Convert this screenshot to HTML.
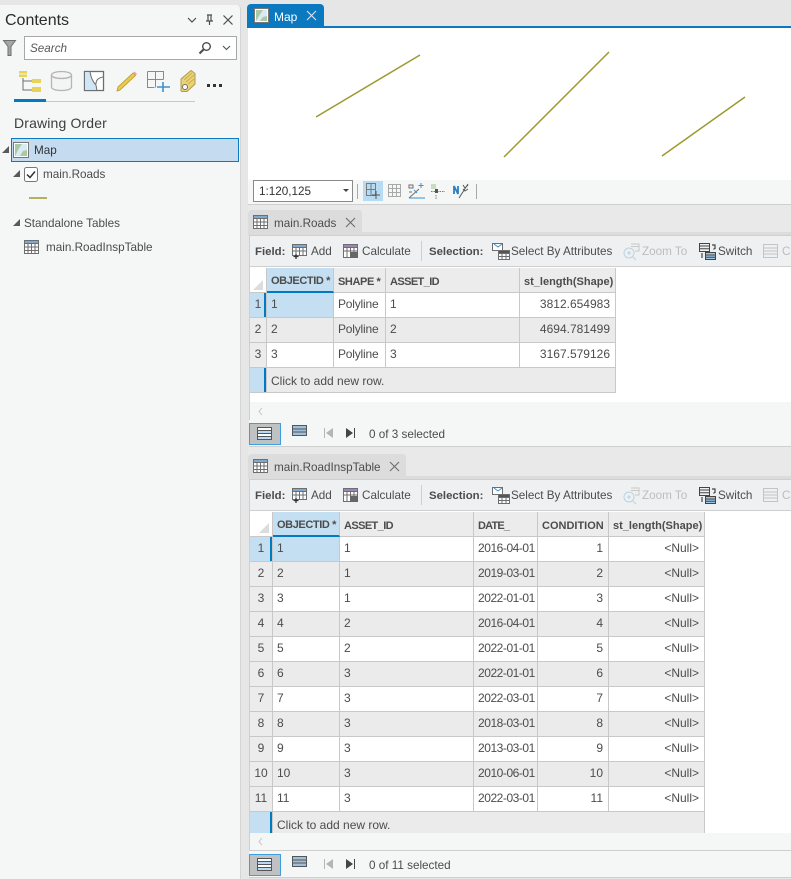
<!DOCTYPE html>
<html><head><meta charset="utf-8"><title>Contents</title>
<style>
html,body{margin:0;padding:0}
body{width:791px;height:879px;overflow:hidden;background:#e6e6e6;position:relative;font-family:"Liberation Sans",sans-serif;font-size:11.7px;color:#4c4c4c}
.a{position:absolute}
.t{position:absolute;white-space:nowrap;line-height:16px;margin-top:1px}
.b{font-weight:bold;font-size:11.4px}
.g{color:#bdbdbd}
table{position:absolute;border-collapse:separate;border-spacing:0;table-layout:fixed;font-size:12px;color:#4c4c4c}
td,th{box-sizing:border-box;height:25px;padding:0 4px;border-right:1px solid #c8c8c8;border-bottom:1px solid #c8c8c8;background:#fff;text-align:left;font-weight:normal;white-space:nowrap;overflow:hidden}
td{padding-bottom:2px}
th{background:#ececec;font-weight:bold;color:#4c4c4c;font-size:11px;padding-top:3px}
tr.e td{background:#ebebeb}
td.n,tr.e td.n{background:#ececec;text-align:center;padding:0 0 2px}
td.r{text-align:right;padding-right:5px}
th.s{background:#c5dff2;border-bottom:2px solid #007ac2}
td.n.s{background:#c5dff2!important;box-shadow:inset -2px 0 0 #007ac2}
td.s2{background:#c5dff2}
td.d{letter-spacing:-.45px}
td.p{letter-spacing:-.2px}
td.k{padding-top:2px;padding-bottom:0}
svg{position:absolute;overflow:visible}
</style></head><body>

<!-- Contents pane -->
<div class="a" style="left:0;top:5px;width:240px;height:874px;background:#f5f6f6;border-top-right-radius:4px;border-right:1px solid #d4d4d4"></div>
<div class="t" style="left:5px;top:10px;font-size:16px;line-height:20px;color:#2b2b2b">Contents</div>
<svg style="left:186px;top:14px" width="54" height="14" fill="none" stroke="#4c4c4c" stroke-width="1.2"><path d="M2 4l4 4 4-4"/><path d="M21 1h5M22 1v6M25 1v6M20 7h7M23.500 7v4"/><path d="M37.500 1.500l9 9M46.500 1.500l-9 9"/></svg>
<svg style="left:3px;top:40px" width="13" height="16"><path d="M0.500 .5h12l-4.500 6v9H5V6.500z" fill="#a5a5a5" stroke="#6e6e6e"/></svg>
<div class="a" style="left:24px;top:36px;width:211px;height:22px;background:#fff;border:1px solid #a8a8a8"></div>
<div class="t" style="left:30px;top:40px;font-style:italic;color:#595959">Search</div>
<svg style="left:198px;top:41px" width="40" height="14" fill="none" stroke="#4c4c4c" stroke-width="1.4"><circle cx="8.500" cy="5.500" r="3.800"/><path d="M5.500 8.500L1.500 12.500" stroke-width="2"/><path d="M25 5l3.500 3.500L32 5" stroke-width="1"/></svg>

<svg style="left:18px;top:70px" width="190" height="24" fill="none">
<path d="M1 1h8v2.500H1zM1 4.500h8V7H1z" fill="#e8d356"/>
<path d="M5 8v12h9M5 11h9" stroke="#6e6e6e"/>
<path d="M14 9h9v4h-9zM14 17h9v5h-9z" fill="#e8d356"/>
<ellipse cx="43.500" cy="5" rx="10" ry="3.500" fill="#f4f4f4" stroke="#b5b5b5" stroke-width="1.300"/>
<path d="M33.500 5v12c0 2 4 3.500 10 3.500s10-1.500 10-3.500V5c0 2-4 3.500-10 3.500S33.500 7 33.500 5z" fill="#f4f4f4" stroke="#b5b5b5" stroke-width="1.300"/>
<rect x="66.500" y="1.500" width="19" height="19" fill="#fff" stroke="#6e6e6e" stroke-width="1.300"/>
<path d="M67 2h5c1 6 3 10 6 13l1 5H67z" fill="#cfe6f6"/>
<path d="M72 2c1 6 3 10 6 13l1 6M78 14c0-4 2-6 7-7" stroke="#6e6e6e"/>
<path d="M99 21l1-4L115 3l2.500 2.500L102 20z" fill="#edc949" stroke="#b59a2e" stroke-width=".8"/>
<path d="M115 3l1.500-1.500 2.500 2.500-1.500 1.500z" fill="#e9a58c"/>
<path d="M129.500 1.500h16v8M129.500 1.500v16h7M137.500 1.500v16M129.500 9.500h16" stroke="#8a8a8a"/>
<path d="M145 12v10M139 17h13" stroke="#3f90cf" stroke-width="1.600"/>
<path d="M163 21V9l10-8.500 4 3V14l-8 7.500h-5z" fill="#ead277" stroke="#b09a4c"/>
<path d="M166 10l8-7M168 12l8-7M170 14l6-5" stroke="#c9b04e"/>
<circle cx="167" cy="17" r="2.500" fill="#fff" stroke="#6e6e6e"/>
</svg>
<div class="a" style="left:207px;top:84px;width:3px;height:3px;background:#333"></div>
<div class="a" style="left:213px;top:84px;width:3px;height:3px;background:#333"></div>
<div class="a" style="left:219px;top:84px;width:3px;height:3px;background:#333"></div>
<div class="a" style="left:14px;top:101px;width:181px;height:1px;background:#c8c8c8"></div>
<div class="a" style="left:14px;top:99px;width:32px;height:3px;background:#007ac2"></div>
<div class="t" style="left:14px;top:113px;font-size:14px;line-height:18px;letter-spacing:.15px;color:#3d3d3d">Drawing Order</div>

<div class="a" style="left:11px;top:138px;width:226px;height:22px;background:#c5dbef;border:1px solid #0b7ac0"></div>
<svg style="left:2px;top:146px" width="8" height="8"><path d="M0 7h7V0z" fill="#5a5a5a"/></svg>
<svg style="left:13px;top:142px" width="16" height="16"><rect x=".5" y=".5" width="15" height="15" fill="#fff" stroke="#777"/><rect x="2" y="2" width="12" height="12" fill="#dbe9f3"/><path d="M2 2h7L5 8l-3 6z" fill="#a9c9a4"/><path d="M7 14h7V8l-4 1z" fill="#a9c9a4"/></svg>
<div class="t" style="left:34px;top:142px;color:#333">Map</div>
<svg style="left:13px;top:170px" width="8" height="8"><path d="M0 7h7V0z" fill="#5a5a5a"/></svg>
<svg style="left:24px;top:167px" width="15" height="15" fill="none"><rect x=".5" y=".5" width="13" height="14" rx="2" fill="#fff" stroke="#777"/><path d="M3 7.500l3 3 5-6" stroke="#333" stroke-width="1.500"/></svg>
<div class="t" style="left:43px;top:166px">main.Roads</div>
<div class="a" style="left:29px;top:197px;width:18px;height:2px;background:#b5b060"></div>
<svg style="left:13px;top:219px" width="8" height="8"><path d="M0 7h7V0z" fill="#5a5a5a"/></svg>
<div class="t" style="left:24px;top:215px">Standalone Tables</div>
<svg style="left:24px;top:240px" width="15" height="14" fill="none" stroke="#6e6e6e"><rect x=".5" y=".5" width="14" height="13" fill="#fff"/><rect x=".5" y=".5" width="14" height="3" fill="#7fa9cf" stroke="#6e6e6e"/><path d="M.5 7h14M.5 10.500h14M4 3.500v10M7.500 3.500v10M11 3.500v10"/></svg>
<div class="t" style="left:46px;top:239px">main.RoadInspTable</div>

<!-- Map tab -->
<div class="a" style="left:247px;top:4px;width:77px;height:22px;background:#0a79bf;border-radius:4px 4px 0 0"></div>
<div class="a" style="left:247px;top:26px;width:544px;height:2px;background:#0a79bf"></div>
<svg style="left:254px;top:8px" width="15" height="15"><rect x=".5" y=".5" width="14" height="14" fill="#fff" stroke="#777"/><rect x="2" y="2" width="11" height="11" fill="#dbe9f3"/><path d="M2 2h7L5 8l-3 5z" fill="#a9c9a4"/><path d="M6 13h7V8l-4 1z" fill="#a9c9a4"/></svg>
<div class="t" style="left:274px;top:8px;color:#fff;font-size:12px">Map</div>
<svg style="left:307px;top:11px" width="10" height="10" stroke="#d5e9f7" stroke-width="1.100"><path d="M0 0l9 9M9 0L0 9"/></svg>

<!-- Map -->
<div class="a" style="left:248px;top:28px;width:543px;height:152px;background:#fff"></div>
<svg style="left:248px;top:28px" width="543" height="152" fill="none" stroke="#9a9a2e" stroke-width="1.500"><path d="M68 89L172 27M256 129L361 24M414 128L497 69"/></svg>
<div class="a" style="left:248px;top:180px;width:543px;height:24px;background:#f5f6f6;border-bottom:1px solid #cfcfcf"></div>
<div class="a" style="left:253px;top:180px;width:98px;height:20px;background:#fff;border:1px solid #8a8a8a"></div>
<div class="t" style="left:259px;top:183px;color:#333">1:120,125</div>
<svg style="left:343px;top:189px" width="6" height="4"><path d="M0 0h6L3 3z" fill="#444"/></svg>
<div class="a" style="left:357px;top:184px;width:1px;height:15px;background:#a8a8a8"></div>
<div class="a" style="left:363px;top:181px;width:20px;height:20px;background:#b6dbf3"></div>
<svg style="left:365px;top:183px" width="120" height="18" fill="none" stroke="#7a7a7a">
<path d="M1.500 .5h9v12h-9zM6 .5v12M1.500 6.500h9"/>
<path d="M11 8v8M7 12h8" stroke="#555"/>
<path d="M23.500 1.500h12v12h-12zM23.500 5.500h12M23.500 9.500h12M27.500 1.500v12M31.500 1.500v12" stroke="#a8a8a8"/>
<path d="M44 2h4v3h-4zM44 9h3M44 15l10-9" stroke="#6e6e6e"/>
<path d="M44 15h16" stroke="#3f90cf"/>
<path d="M56 0v5M53.500 2.500h5M49 7l3 3" stroke="#3f90cf"/>
<rect x="66" y="1" width="5" height="5" fill="#c9dcbf" stroke="none"/>
<path d="M72 8.500h8M66 8.500h4M71 12v4" stroke-dasharray="1.500 1"/>
<rect x="70" y="6" width="3" height="4" fill="#555" stroke="none"/>
<path d="M89 11V3l4 8V3" stroke="#2f7fc1" stroke-width="1.800"/>
<path d="M94 15l9-14M98 2l2 3 3-3M98 6l2 2 3-2" stroke="#555"/>
</svg>
<div class="a" style="left:476px;top:184px;width:1px;height:15px;background:#a8a8a8"></div>

<!-- main.Roads tab + toolbar -->
<div class="a" style="left:248px;top:205px;width:543px;height:30px;background:#e9e9e9"></div>
<div class="a" style="left:248px;top:232px;width:543px;height:3px;background:#dcdcdc"></div>
<div class="a" style="left:248px;top:210px;width:114px;height:22px;background:#dcdcdc;border-radius:4px 4px 0 0"></div>
<svg style="left:253px;top:215px" width="15" height="14" fill="none" stroke="#6e6e6e"><rect x=".5" y=".5" width="14" height="13" fill="#fff"/><rect x=".5" y=".5" width="14" height="3" fill="#7fa9cf"/><path d="M.5 7h14M.5 10.500h14M4 3.500v10M7.500 3.500v10M11 3.500v10"/></svg>
<div class="t" style="left:274px;top:215px">main.Roads</div>
<svg style="left:346px;top:218px" width="10" height="10" stroke="#6e6e6e" stroke-width="1.100"><path d="M0 0l9 9M9 0L0 9"/></svg>

<div class="a" style="left:249px;top:235px;width:542px;height:188px;background:#fff;border:1px solid #cfcfcf;border-right:0;box-sizing:border-box"></div>
<div class="a" style="left:250px;top:236px;width:541px;height:30px;background:#eef0f1;border-bottom:1px solid #cfcfcf"></div>
<div class="t b" style="left:255px;top:243px">Field:</div>
<svg style="left:292px;top:244px" width="15" height="15" fill="none" stroke="#6e6e6e"><rect x=".5" y=".5" width="14" height="11" fill="#fff"/><rect x=".5" y=".5" width="14" height="3" fill="#7fa9cf"/><path d="M.5 7h14M4 3.500v8M7.500 3.500v8M11 3.500v8"/><path d="M4 10v5M1.500 12.500h5" stroke="#333" stroke-width="1.300"/></svg>
<div class="t" style="left:311px;top:243px">Add</div>
<svg style="left:343px;top:244px" width="16" height="15" fill="none" stroke="#6e6e6e"><rect x=".5" y=".5" width="14" height="13" fill="#fff"/><rect x=".5" y=".5" width="14" height="3" fill="#9a86b8"/><path d="M.5 7h14M4 3.500v10M7.500 3.500v10M11 3.500v10"/><rect x="7" y="8" width="8" height="6" fill="#666" stroke="none"/></svg>
<div class="t" style="left:362px;top:243px">Calculate</div>
<div class="a" style="left:421px;top:241px;width:1px;height:20px;background:#cfcfcf"></div>
<div class="t b" style="left:429px;top:243px">Selection:</div>
<svg style="left:492px;top:243px" width="18" height="17" fill="none" stroke="#6e6e6e"><path d="M.5 .5h10v7h-10z" fill="#fff"/><path d="M2 1l4 3 4-3" stroke="#3f90cf"/><rect x="6.500" y="7.500" width="11" height="9" fill="#fff"/><rect x="6.500" y="7.500" width="11" height="3" fill="#555"/><path d="M6.500 13.500h11M10 10v6M14 10v6"/></svg>
<div class="t" style="left:511px;top:243px">Select By Attributes</div>
<svg style="left:623px;top:243px" width="17" height="17" fill="none" stroke="#bcd2e3"><circle cx="6" cy="10" r="5"/><path d="M4 10h4M6 8v4M10 14l3 3" /><path d="M8 1h8v7h-4M8 3.500h8" stroke="#c9c9c9"/></svg>
<div class="t g" style="left:642px;top:243px">Zoom To</div>
<svg style="left:699px;top:243px" width="17" height="17" fill="none" stroke="#444"><path d="M.5 .5h10v8H.5zM.5 3h10M.5 5.800h10"/><path d="M6.500 9.500h10v7h-10zM6.500 12h10M6.500 14.200h10" fill="#9fc5e4"/><path d="M13 2h3v4M14.500 6.500l1.500-1.500M3 10v5" stroke-width="1.200"/></svg>
<div class="t" style="left:718px;top:243px">Switch</div>
<svg style="left:763px;top:244px" width="15" height="15" fill="none" stroke="#c4c4c4"><path d="M.5 .5h14v13H.5zM.5 4h14M.5 7h14M.5 10h14"/></svg>
<div class="t g" style="left:782px;top:243px">C</div>

<table style="left:250px;top:268px;width:366px">
<colgroup><col style="width:17px"><col style="width:67px"><col style="width:52px"><col style="width:134px"><col style="width:96px"></colgroup>
<tr><th style="background:#fff;position:relative"><svg style="left:3px;top:12px" width="10" height="10"><path d="M10 0v10H0z" fill="#dcdcdc"/></svg></th><th class="s" style="letter-spacing:-.4px">OBJECTID *</th><th style="letter-spacing:-.4px">SHAPE *</th><th style="letter-spacing:-.6px">ASSET_ID</th><th>st_length(Shape)</th></tr>
<tr><td class="n s">1</td><td class="s2">1</td><td class="p">Polyline</td><td>1</td><td class="r">3812.654983</td></tr>
<tr class="e"><td class="n">2</td><td>2</td><td class="p">Polyline</td><td>2</td><td class="r">4694.781499</td></tr>
<tr><td class="n">3</td><td>3</td><td class="p">Polyline</td><td>3</td><td class="r">3167.579126</td></tr>
<tr class="e"><td class="n s"></td><td colspan="4" class="k">Click to add new row.</td></tr>
</table>
<div class="a" style="left:250px;top:402px;width:541px;height:18px;background:#f5f6f6"></div>
<svg style="left:258px;top:407px" width="5" height="9" fill="none" stroke="#c8c8c8"><path d="M4 1L1 4.500 4 8"/></svg>
<div class="a" style="left:249px;top:420px;width:542px;height:26px;background:#f5f6f6;border-bottom:1px solid #cfcfcf"></div>
<div class="a" style="left:249px;top:423px;width:30px;height:20px;background:#bfc1c3;border:1px solid #3f9fdc"></div>
<svg style="left:257px;top:427px" width="15" height="14" fill="none" stroke="#555"><path d="M.5 .5h14v12H.5zM.5 3.500h14M.5 6.500h14M.5 9.500h14" fill="#fff"/><path d="M1 4h13v2H1zM1 10h13v2H1z" fill="#b6dbf3" stroke="none"/></svg>
<svg style="left:292px;top:425px" width="15" height="12" fill="none" stroke="#555"><rect x=".5" y=".5" width="14" height="10" fill="#9fc0dd"/><path d="M.5 4h14M.5 7h14"/></svg>
<svg style="left:324px;top:428px" width="40" height="11"><path d="M.5 0v10" stroke="#b5b5b5"/><path d="M9 0v10L2 5z" fill="#b5b5b5"/><path d="M22 0v10l7-5z" fill="#444"/><path d="M30.500 0v10" stroke="#444"/></svg>
<div class="t" style="left:369px;top:426px">0 of 3 selected</div>

<!-- main.RoadInspTable -->
<div class="a" style="left:248px;top:447px;width:543px;height:33px;background:#e9e9e9"></div>
<div class="a" style="left:248px;top:476px;width:543px;height:3px;background:#dcdcdc"></div>
<div class="a" style="left:248px;top:454px;width:158px;height:22px;background:#dcdcdc;border-radius:4px 4px 0 0"></div>
<svg style="left:253px;top:459px" width="15" height="14" fill="none" stroke="#6e6e6e"><rect x=".5" y=".5" width="14" height="13" fill="#fff"/><rect x=".5" y=".5" width="14" height="3" fill="#7fa9cf"/><path d="M.5 7h14M.5 10.500h14M4 3.500v10M7.500 3.500v10M11 3.500v10"/></svg>
<div class="t" style="left:274px;top:459px">main.RoadInspTable</div>
<svg style="left:390px;top:462px" width="10" height="10" stroke="#6e6e6e" stroke-width="1.100"><path d="M0 0l9 9M9 0L0 9"/></svg>

<div class="a" style="left:249px;top:479px;width:542px;height:372px;background:#fff;border:1px solid #cfcfcf;border-right:0;box-sizing:border-box"></div>
<div class="a" style="left:250px;top:480px;width:541px;height:30px;background:#eef0f1;border-bottom:1px solid #cfcfcf"></div>
<div class="t b" style="left:255px;top:487px">Field:</div>
<svg style="left:292px;top:488px" width="15" height="15" fill="none" stroke="#6e6e6e"><rect x=".5" y=".5" width="14" height="11" fill="#fff"/><rect x=".5" y=".5" width="14" height="3" fill="#7fa9cf"/><path d="M.5 7h14M4 3.500v8M7.500 3.500v8M11 3.500v8"/><path d="M4 10v5M1.500 12.500h5" stroke="#333" stroke-width="1.300"/></svg>
<div class="t" style="left:311px;top:487px">Add</div>
<svg style="left:343px;top:488px" width="16" height="15" fill="none" stroke="#6e6e6e"><rect x=".5" y=".5" width="14" height="13" fill="#fff"/><rect x=".5" y=".5" width="14" height="3" fill="#9a86b8"/><path d="M.5 7h14M4 3.500v10M7.500 3.500v10M11 3.500v10"/><rect x="7" y="8" width="8" height="6" fill="#666" stroke="none"/></svg>
<div class="t" style="left:362px;top:487px">Calculate</div>
<div class="a" style="left:421px;top:485px;width:1px;height:20px;background:#cfcfcf"></div>
<div class="t b" style="left:429px;top:487px">Selection:</div>
<svg style="left:492px;top:487px" width="18" height="17" fill="none" stroke="#6e6e6e"><path d="M.5 .5h10v7h-10z" fill="#fff"/><path d="M2 1l4 3 4-3" stroke="#3f90cf"/><rect x="6.500" y="7.500" width="11" height="9" fill="#fff"/><rect x="6.500" y="7.500" width="11" height="3" fill="#555"/><path d="M6.500 13.500h11M10 10v6M14 10v6"/></svg>
<div class="t" style="left:511px;top:487px">Select By Attributes</div>
<svg style="left:623px;top:487px" width="17" height="17" fill="none" stroke="#bcd2e3"><circle cx="6" cy="10" r="5"/><path d="M4 10h4M6 8v4M10 14l3 3" /><path d="M8 1h8v7h-4M8 3.500h8" stroke="#c9c9c9"/></svg>
<div class="t g" style="left:642px;top:487px">Zoom To</div>
<svg style="left:699px;top:487px" width="17" height="17" fill="none" stroke="#444"><path d="M.5 .5h10v8H.5zM.5 3h10M.5 5.800h10"/><path d="M6.500 9.500h10v7h-10zM6.500 12h10M6.500 14.200h10" fill="#9fc5e4"/><path d="M13 2h3v4M14.500 6.500l1.500-1.500M3 10v5" stroke-width="1.200"/></svg>
<div class="t" style="left:718px;top:487px">Switch</div>
<svg style="left:763px;top:488px" width="15" height="15" fill="none" stroke="#c4c4c4"><path d="M.5 .5h14v13H.5zM.5 4h14M.5 7h14M.5 10h14"/></svg>
<div class="t g" style="left:782px;top:487px">C</div>

<table style="left:250px;top:512px;width:455px">
<colgroup><col style="width:23px"><col style="width:67px"><col style="width:134px"><col style="width:64px"><col style="width:71px"><col style="width:96px"></colgroup>
<tr><th style="background:#fff;position:relative"><svg style="left:9px;top:11px" width="10" height="10"><path d="M10 0v10H0z" fill="#dcdcdc"/></svg></th><th class="s" style="letter-spacing:-.4px">OBJECTID *</th><th style="letter-spacing:-.6px">ASSET_ID</th><th style="letter-spacing:-.8px">DATE_</th><th>CONDITION</th><th>st_length(Shape)</th></tr>
<tr><td class="n s">1</td><td class="s2">1</td><td>1</td><td class="d">2016-04-01</td><td class="r">1</td><td class="r">&lt;Null&gt;</td></tr>
<tr class="e"><td class="n">2</td><td>2</td><td>1</td><td class="d">2019-03-01</td><td class="r">2</td><td class="r">&lt;Null&gt;</td></tr>
<tr><td class="n">3</td><td>3</td><td>1</td><td class="d">2022-01-01</td><td class="r">3</td><td class="r">&lt;Null&gt;</td></tr>
<tr class="e"><td class="n">4</td><td>4</td><td>2</td><td class="d">2016-04-01</td><td class="r">4</td><td class="r">&lt;Null&gt;</td></tr>
<tr><td class="n">5</td><td>5</td><td>2</td><td class="d">2022-01-01</td><td class="r">5</td><td class="r">&lt;Null&gt;</td></tr>
<tr class="e"><td class="n">6</td><td>6</td><td>3</td><td class="d">2022-01-01</td><td class="r">6</td><td class="r">&lt;Null&gt;</td></tr>
<tr><td class="n">7</td><td>7</td><td>3</td><td class="d">2022-03-01</td><td class="r">7</td><td class="r">&lt;Null&gt;</td></tr>
<tr class="e"><td class="n">8</td><td>8</td><td>3</td><td class="d">2018-03-01</td><td class="r">8</td><td class="r">&lt;Null&gt;</td></tr>
<tr><td class="n">9</td><td>9</td><td>3</td><td class="d">2013-03-01</td><td class="r">9</td><td class="r">&lt;Null&gt;</td></tr>
<tr class="e"><td class="n">10</td><td>10</td><td>3</td><td class="d">2010-06-01</td><td class="r">10</td><td class="r">&lt;Null&gt;</td></tr>
<tr><td class="n">11</td><td>11</td><td>3</td><td class="d">2022-03-01</td><td class="r">11</td><td class="r">&lt;Null&gt;</td></tr>
<tr class="e"><td class="n s"></td><td colspan="5" class="k">Click to add new row.</td></tr>
</table>
<div class="a" style="left:250px;top:833px;width:541px;height:17px;background:#f5f6f6;border-bottom:1px solid #cfcfcf"></div>
<svg style="left:258px;top:837px" width="5" height="9" fill="none" stroke="#c8c8c8"><path d="M4 1L1 4.500 4 8"/></svg>
<div class="a" style="left:249px;top:851px;width:542px;height:26px;background:#f5f6f6;border-bottom:1px solid #cfcfcf"></div>
<div class="a" style="left:249px;top:854px;width:30px;height:20px;background:#bfc1c3;border:1px solid #3f9fdc"></div>
<svg style="left:257px;top:858px" width="15" height="14" fill="none" stroke="#555"><path d="M.5 .5h14v12H.5zM.5 3.500h14M.5 6.500h14M.5 9.500h14" fill="#fff"/><path d="M1 4h13v2H1zM1 10h13v2H1z" fill="#b6dbf3" stroke="none"/></svg>
<svg style="left:292px;top:856px" width="15" height="12" fill="none" stroke="#555"><rect x=".5" y=".5" width="14" height="10" fill="#9fc0dd"/><path d="M.5 4h14M.5 7h14"/></svg>
<svg style="left:324px;top:859px" width="40" height="11"><path d="M.5 0v10" stroke="#b5b5b5"/><path d="M9 0v10L2 5z" fill="#b5b5b5"/><path d="M22 0v10l7-5z" fill="#444"/><path d="M30.500 0v10" stroke="#444"/></svg>
<div class="t" style="left:369px;top:857px">0 of 11 selected</div>
</body></html>
